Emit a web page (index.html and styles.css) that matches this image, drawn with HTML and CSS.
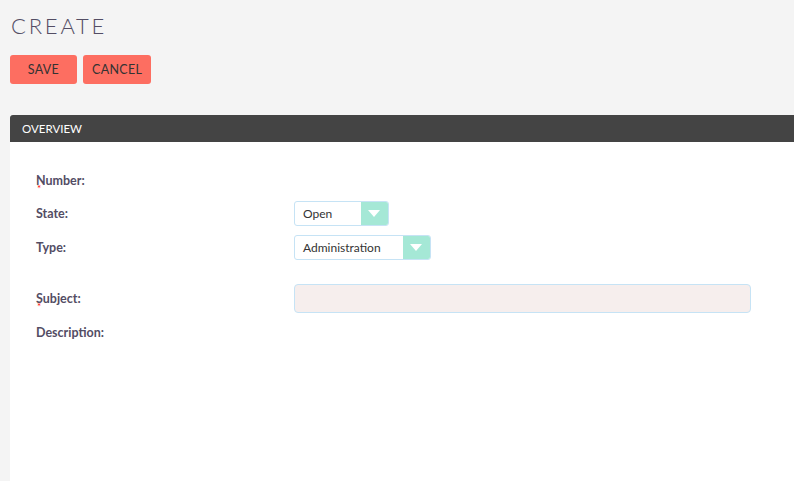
FILE: index.html
```html
<!DOCTYPE html>
<html lang="en">
<head>
    <meta charset="UTF-8">
    <title>Create</title>
    <link rel="stylesheet" href="styles.css">
</head>
<body>
    <h2 class="page-title">Create</h2>

    <div class="action-buttons">
        <button class="btn">Save</button>
        <button class="btn">Cancel</button>
    </div>

    <div class="panel">
        <div class="panel-heading">Overview</div>
        <div class="panel-body">
            <div class="form-row">
                <label class="field-label required">Number:<span class="req">*</span></label>
            </div>
            <div class="form-row">
                <label class="field-label">State:</label>
                <div class="select small">
                    <span class="select-value">Open</span>
                    <span class="select-arrow"></span>
                </div>
            </div>
            <div class="form-row">
                <label class="field-label">Type:</label>
                <div class="select wide">
                    <span class="select-value">Administration</span>
                    <span class="select-arrow"></span>
                </div>
            </div>
            <div class="form-row spaced">
                <label class="field-label required">Subject:<span class="req">*</span></label>
                <input type="text" class="text-input">
            </div>
            <div class="form-row">
                <label class="field-label">Description:</label>
            </div>
        </div>
    </div>
</body>
</html>
```

FILE: styles.css
```css
:root {
    --text-color: #534d64;
    --button-color: #fd6e61;
    --arrow-color: #a5e8d6;
    --border-color: #c6e3f5;
}

* {
    margin: 0;
    padding: 0;
    box-sizing: border-box;
}

body {
    font-family: 'Lato', 'Liberation Sans', sans-serif;
    background-color: #f4f4f4;
    color: var(--text-color);
    padding-left: 10px;
    overflow: hidden;
}

.page-title {
    font-size: 22px;
    font-weight: 300;
    text-transform: uppercase;
    letter-spacing: 2.8px;
    color: #534d64;
    line-height: 30px;
    padding-top: 11px;
    padding-left: 1px;
}

.action-buttons {
    display: flex;
    gap: 6px;
    margin-top: 14px;
}

.btn {
    height: 29px;
    padding: 0 9px;
    min-width: 67px;
    border: none;
    border-radius: 3px;
    background-color: var(--button-color);
    color: #333;
    font-family: 'Lato', sans-serif;
    font-size: 12.5px;
    text-transform: uppercase;
    letter-spacing: 0.3px;
}

.panel {
    margin-top: 31px;
    background-color: #fff;
    min-height: 400px;
    margin-right: -10px;
}

.panel-heading {
    background-color: #444;
    color: #fff;
    height: 27px;
    line-height: 27px;
    padding-left: 12px;
    font-size: 11.5px;
    text-transform: uppercase;
    border-top-left-radius: 3px;
}

.panel-body {
    padding: 26px 0 0 26px;
}

.form-row {
    display: flex;
    align-items: center;
    min-height: 25px;
    margin-bottom: 9px;
}

.form-row:first-child {
    margin-bottom: 8px;
}

.form-row.spaced {
    margin-top: 24px;
    margin-bottom: 7px;
}

.field-label {
    width: 258px;
    font-size: 12.5px;
    font-weight: bold;
    position: relative;
}

.req {
    position: absolute;
    left: 1px;
    top: 10px;
    color: #f00;
    font-size: 10px;
    line-height: 10px;
    font-weight: normal;
}

.select {
    display: flex;
    height: 25px;
    border: 1px solid var(--border-color);
    border-radius: 3px;
    background: #fff;
    overflow: hidden;
}

.select.small {
    width: 95px;
}

.select.wide {
    width: 137px;
}

.select-value {
    flex: 1;
    padding-left: 8px;
    font-size: 12px;
    line-height: 23px;
    color: #333;
}

.select-arrow {
    width: 27px;
    background-color: var(--arrow-color);
    position: relative;
}

.select-arrow::after {
    content: '';
    position: absolute;
    left: 7px;
    top: 8px;
    border-left: 6px solid transparent;
    border-right: 6px solid transparent;
    border-top: 7px solid #fff;
}

.text-input {
    width: 457px;
    height: 29px;
    border: 1px solid var(--border-color);
    border-radius: 4px;
    background-color: #f6eeed;
}
```
